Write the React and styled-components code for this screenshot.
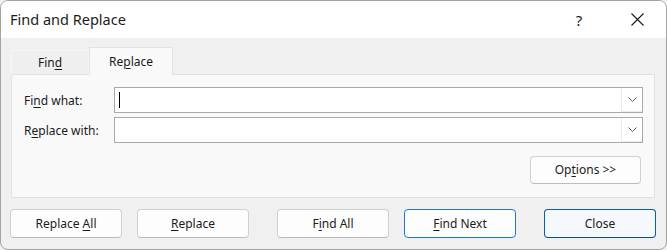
import React from 'react';
import styled, { createGlobalStyle } from 'styled-components';

const GlobalStyle = createGlobalStyle`
    body {
        margin: 0;
        background: #f0f0f0;
        font-family: "Segoe UI", "Noto Sans", sans-serif;
        color: #1b1b1b;
    }
`

const Window = styled.div`
    box-sizing: border-box;
    width: 667px;
    height: 250px;
    display: flex;
    flex-direction: column;
    background: #f0f0f0;
    border: 1px solid #a3a3a3;
    border-radius: 8px;
    overflow: hidden;
`

const TitleBar = styled.div`
    height: 37px;
    flex-shrink: 0;
    display: flex;
    align-items: center;
    background: #ffffff;
    padding-left: 9px;
`

const Title = styled.div`
    flex: 1;
    font-size: 14.5px;
    padding-bottom: 2px;
`

const CaptionButton = styled.div`
    width: 58px;
    height: 37px;
    display: flex;
    align-items: center;
    justify-content: center;
    font-size: 15px;
`

const Body = styled.div`
    flex: 1;
    display: flex;
    flex-direction: column;
    padding: 9px 10px 0 9px;
`

const TabStrip = styled.div`
    display: flex;
    align-items: flex-end;
    height: 28px;
    margin: 0 1px -1px 1px;
`

const Tab = styled.div`
    box-sizing: border-box;
    position: relative;
    z-index: ${p => (p.$active ? 1 : 0)};
    height: ${p => (p.$active ? '28px' : '25px')};
    width: ${p => p.$width}px;
    display: flex;
    align-items: center;
    justify-content: center;
    font-size: 12px;
    background: ${p => (p.$active ? '#f9f9f9' : '#efefef')};
    border: 1px solid ${p => (p.$active ? '#e2e2e2' : '#f7f7f7')};
    border-bottom: ${p => (p.$active ? 'none' : '1px solid #e2e2e2')};
    padding-bottom: ${p => (p.$active ? '1px' : '0')};
`

const Panel = styled.div`
    display: flex;
    flex-direction: column;
    margin: 0 1px;
    padding: 12px 11px 13px 12px;
    background: #f9f9f9;
    border: 1px solid #e2e2e2;
`

const FieldRow = styled.div`
    display: flex;
    align-items: center;
    height: 26px;
    margin-top: ${p => (p.$first ? '0' : '4px')};
`

const Label = styled.div`
    width: 90px;
    font-size: 12px;
`

const ComboBox = styled.div`
    box-sizing: border-box;
    flex: 1;
    height: 26px;
    display: flex;
    background: #ffffff;
    border: 1px solid #a9a9a9;
`

const Field = styled.div`
    flex: 1;
    display: flex;
    align-items: center;
    padding-left: 4px;
`

const Caret = styled.span`
    width: 1px;
    height: 16px;
    background: #000000;
`

const DropButton = styled.div`
    width: 20px;
    display: flex;
    align-items: center;
    justify-content: center;
    border-left: 1px solid #ececec;
    border-bottom: 1px solid #ececec;
`

const OptionsRow = styled.div`
    display: flex;
    justify-content: flex-end;
    margin-top: 13px;
    padding-right: 2px;
`

const Footer = styled.div`
    display: flex;
    margin-top: 11px;
`

const Button = styled.div`
    box-sizing: border-box;
    width: ${p => p.$width || 112}px;
    height: ${p => (p.$tall ? '29px' : '28px')};
    margin-left: ${p => p.$gap || 0}px;
    display: flex;
    align-items: center;
    justify-content: center;
    font-size: 12px;
    border-radius: 4px;
    background: ${p => (p.$default ? '#f5f9fd' : '#fdfdfd')};
    border: 1px solid ${p => (p.$default ? '#0b5ca8' : p.$focus ? '#1b78cc' : '#d0d0d0')};
    border-bottom-color: ${p => (p.$default ? '#0a4f90' : p.$focus ? '#1b78cc' : '#bcbcbc')};
    padding-bottom: 1px;
`

const Key = styled.u`
    text-underline-offset: 2px;
    text-decoration-thickness: 1px;
`

const Chevron = () => (
    <svg width="9" height="5" viewBox="0 0 9 5">
        <polyline points="0.5,0.5 4.5,4.5 8.5,0.5" fill="none" stroke="#5c5c5c" strokeWidth="1" />
    </svg>
)

const CloseGlyph = () => (
    <svg width="13" height="13" viewBox="0 0 13 13">
        <path d="M0.5 0.5 L12.5 12.5 M12.5 0.5 L0.5 12.5" stroke="#1b1b1b" strokeWidth="1.1" />
    </svg>
)

export default function App() {
    return (
        <>
            <GlobalStyle />
            <Window>
                <TitleBar>
                    <Title>Find and Replace</Title>
                    <CaptionButton>?</CaptionButton>
                    <CaptionButton><CloseGlyph /></CaptionButton>
                </TitleBar>
                <Body>
                    <TabStrip>
                        <Tab $width={78}><span>Fin<Key>d</Key></span></Tab>
                        <Tab $width={84} $active><span>Re<Key>p</Key>lace</span></Tab>
                    </TabStrip>
                    <Panel>
                        <FieldRow $first>
                            <Label>Fi<Key>n</Key>d what:</Label>
                            <ComboBox>
                                <Field><Caret /></Field>
                                <DropButton><Chevron /></DropButton>
                            </ComboBox>
                        </FieldRow>
                        <FieldRow>
                            <Label>R<Key>e</Key>place with:</Label>
                            <ComboBox>
                                <Field />
                                <DropButton><Chevron /></DropButton>
                            </ComboBox>
                        </FieldRow>
                        <OptionsRow>
                            <Button $width={111}><span>Op<Key>t</Key>ions &gt;&gt;</span></Button>
                        </OptionsRow>
                    </Panel>
                    <Footer>
                        <Button $tall><span>Replace <Key>A</Key>ll</span></Button>
                        <Button $tall $gap={15}><span><Key>R</Key>eplace</span></Button>
                        <Button $tall $gap={28}><span>F<Key>i</Key>nd All</span></Button>
                        <Button $tall $gap={15} $focus><span><Key>F</Key>ind Next</span></Button>
                        <Button $tall $gap={28} $default><span>Close</span></Button>
                    </Footer>
                </Body>
            </Window>
        </>
    )
}
